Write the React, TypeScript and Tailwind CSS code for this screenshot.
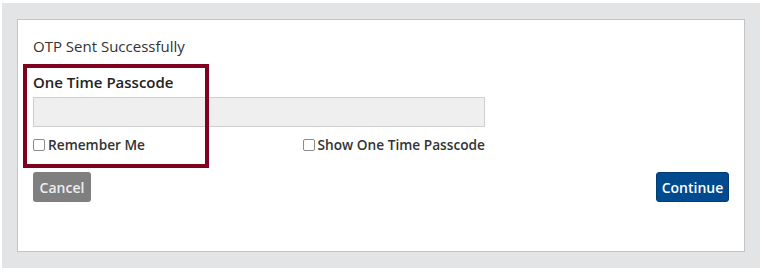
import { useState } from "react";

function Check({ checked, onToggle }: { checked: boolean; onToggle: () => void }) {
  return (
    <span
      role="checkbox"
      aria-checked={checked}
      onClick={onToggle}
      className="inline-flex h-[12px] w-[12px] flex-none items-center justify-center rounded-[2px] border border-[#8c8c8c] bg-white"
    >
      {checked && <span className="h-[6px] w-[6px] bg-[#333]" />}
    </span>
  );
}

export default function App() {
  const [remember, setRemember] = useState(false);
  const [show, setShow] = useState(false);

  return (
    <div
      className="min-h-screen bg-white pl-[2px] pt-[3px]"
      style={{ fontFamily: '"Open Sans", "Noto Sans", sans-serif' }}
    >
      <div className="h-[265px] w-[758px] bg-[#e3e4e6] px-[15px] pt-[16px]">
        <div className="relative h-[233px] border border-[#c4c4c4] bg-white px-[15px] pt-[15px]">
          <p className="text-[15px] leading-[22px] text-[#333]">OTP Sent Successfully</p>

          <label className="mt-[14px] block text-[15px] font-semibold leading-[22px] text-[#222]">
            One Time Passcode
          </label>
          <input
            type={show ? "text" : "password"}
            className="mt-[4px] block h-[30px] w-[452px] border border-[#cfcfcf] bg-[#efefef] px-2 text-[14px] outline-none"
          />

          <div className="mt-[8px] flex w-[452px] items-center justify-between text-[13.7px] font-semibold leading-[20px] text-[#333]">
            <label className="flex items-center gap-[3px]">
              <Check checked={remember} onToggle={() => setRemember(!remember)} />
              Remember Me
            </label>
            <label className="flex items-center gap-[3px]">
              <Check checked={show} onToggle={() => setShow(!show)} />
              Show One Time Passcode
            </label>
          </div>

          <div className="mt-[17px] flex items-center justify-between">
            <button
              type="button"
              className="h-[30px] w-[58px] rounded-[3px] bg-[#7f7f7f] text-[14px] font-semibold text-[#eeeeee]"
            >
              Cancel
            </button>
            <button
              type="button"
              className="h-[30px] w-[73px] rounded-[3px] border border-[#003d75] bg-[#004a8f] text-[14px] font-semibold text-white"
            >
              Continue
            </button>
          </div>

          {/* highlight box drawn over the passcode field */}
          <div className="pointer-events-none absolute left-[5px] top-[44px] h-[104px] w-[186px] border-[4px] border-[#800020]" />
        </div>
      </div>
    </div>
  );
}
